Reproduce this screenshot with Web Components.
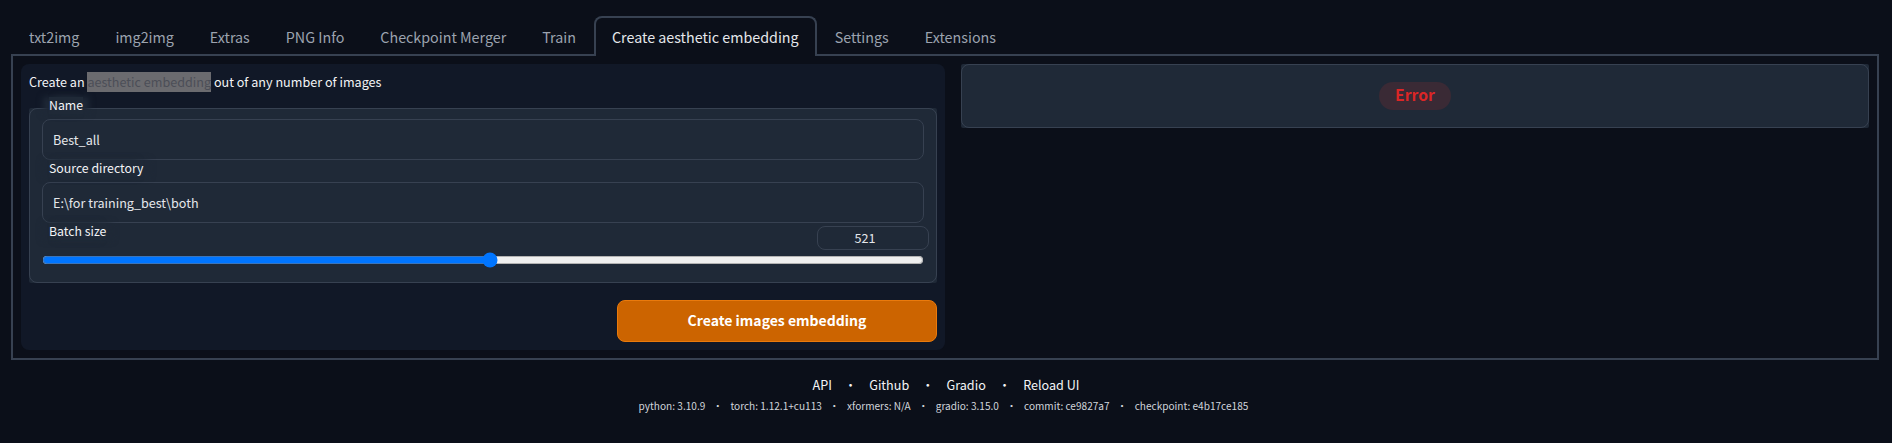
<!DOCTYPE html>
<html lang="en">
<head>
<meta charset="utf-8">
<title>Create aesthetic embedding</title>
<style>
  html, body { margin: 0; background: #0b0f19; }
  body { font-family: "Noto Sans CJK SC", "Noto Sans", sans-serif; color: #e5e7eb; font-size: 12.6px; }
</style>
</head>
<body>
<ui-app>
  <ui-tabs slot="tabs">
    <ui-tab>txt2img</ui-tab>
    <ui-tab>img2img</ui-tab>
    <ui-tab>Extras</ui-tab>
    <ui-tab>PNG Info</ui-tab>
    <ui-tab>Checkpoint Merger</ui-tab>
    <ui-tab>Train</ui-tab>
    <ui-tab active>Create aesthetic embedding</ui-tab>
    <ui-tab>Settings</ui-tab>
    <ui-tab>Extensions</ui-tab>
  </ui-tabs>
  <ui-frame slot="frame">
    <ui-column>
      <ui-intro>Create an <mark-text>aesthetic embedding</mark-text> out of any number of images</ui-intro>
      <ui-form>
        <ui-field label="Name">Best_all</ui-field>
        <ui-field label="Source directory">E:\for training_best\both</ui-field>
        <ui-slider label="Batch size" min="1" max="1024" value="521"></ui-slider>
      </ui-form>
      <ui-button>Create images embedding</ui-button>
    </ui-column>
    <ui-result>Error</ui-result>
  </ui-frame>
  <ui-footer slot="footer"></ui-footer>
</ui-app>

<script>
// small base class, every element just gives its own html
class Base extends HTMLElement {
  constructor() {
    super();
    this.attachShadow({ mode: "open" });
  }
  connectedCallback() {
    this.shadowRoot.innerHTML = this.html();
  }
}

class UiApp extends Base {
  html() {
    return `
      <style>
      :host{display:block;padding:16px 13px 0 11px;}
      </style>
      <slot name="tabs"></slot>
      <slot name="frame"></slot>
      <slot name="footer"></slot>
    `;
  }
}

class UiTabs extends Base {
  html() {
    return `
      <style>
      :host{display:flex;height:40px;box-sizing:border-box;border-bottom:2px solid #374151;}
      </style>
      <slot></slot>
    `;
  }
}

class UiTab extends Base {
  html() {
    return `
      <style>
      :host{display:block;height:40px;box-sizing:border-box;padding:7px 16px 0;font-size:14.3px;line-height:24px;
        border:2px solid transparent;border-bottom:0;color:#9ca3af;white-space:nowrap;}
      :host([active]){border-color:#374151;border-radius:8px 8px 0 0;background:#0b0f19;color:#e5e7eb;}
      </style>
      <slot></slot>
    `;
  }
}

class UiFrame extends Base {
  html() {
    return `
      <style>
      :host{display:grid;grid-template-columns:924fr 908fr;gap:16px;align-items:start;height:304px;box-sizing:border-box;
        padding:8px;border:2px solid #374151;border-top:0;}
      </style>
      <slot></slot>
    `;
  }
}

class UiColumn extends Base {
  html() {
    return `
      <style>
      :host{display:flex;flex-direction:column;box-sizing:border-box;height:286px;padding:6px 8px 8px;background:#111827;border-radius:8px;}
      </style>
      <slot></slot>
    `;
  }
}

class UiIntro extends Base {
  html() {
    return `
      <style>
      :host{display:block;height:24px;margin-bottom:14px;font-size:12.6px;line-height:24px;color:#f3f4f6;white-space:nowrap;}
      </style>
      <slot></slot>
    `;
  }
}

class MarkText extends Base {
  html() {
    return `
      <style>
      :host{display:inline-block;height:20px;line-height:20px;vertical-align:top;margin-top:2px;background:#6b6b6f;color:#4b4e57;}
      </style>
      <slot></slot>
    `;
  }
}

class UiForm extends Base {
  html() {
    return `
      <style>
      :host{display:flex;flex-direction:column;gap:12px;position:relative;box-sizing:border-box;height:175px;padding:1px 13px 0;background:#1f2937;border-radius:2px;}
      :host::before{content:"";position:absolute;inset:0;border:1px solid #374151;border-radius:8px;pointer-events:none;}
      </style>
      <slot></slot>
    `;
  }
}

// label that sits over the top edge of its field
const labelCss = `
  .label{position:absolute;left:7px;top:-12px;z-index:3;font-size:12.3px;line-height:17px;color:#f3f4f6;background:#1f2937;
    box-shadow:6px 0 6px 0 #1f2937,-6px 0 6px 0 #1f2937;white-space:nowrap;}
`;

class UiField extends Base {
  html() {
    return `
      <style>
      :host{display:block;position:relative;padding-top:10px;}
      ${labelCss}
      .box{height:41px;box-sizing:border-box;padding:0 10px;border:1px solid #374151;border-radius:8px;background:#1f2937;
        font-size:12.6px;line-height:39px;color:#e5e7eb;white-space:nowrap;}
      </style>
      <div class="label">${this.getAttribute("label")}</div>
      <div class="box"><slot></slot></div>
    `;
  }
}

class UiSlider extends Base {
  html() {
    const min = this.getAttribute("min"), max = this.getAttribute("max"), value = this.getAttribute("value");
    return `
      <style>
      :host{display:block;position:relative;}
      ${labelCss}
      .top{display:flex;justify-content:flex-end;margin:-9px -5px 2px 0;}
      .num{width:112px;height:24px;box-sizing:border-box;padding-right:16px;border:1px solid #374151;border-radius:8px;
        text-align:center;font-size:12.6px;line-height:22px;color:#e5e7eb;}
      input{display:block;box-sizing:border-box;width:882px;height:16px;margin:0;}
      </style>
      <div class="label">${this.getAttribute("label")}</div>
      <div class="top"><div class="num">${value}</div></div>
      <input type="range" min="${min}" max="${max}" value="${value}">
    `;
  }
}

class UiButton extends Base {
  html() {
    return `
      <style>
      :host{display:block;align-self:flex-end;width:320px;height:42px;box-sizing:border-box;margin-top:17px;border:1px solid #ea7a0c;border-radius:8px;
        background:#cc6400;color:#fff;font-size:14px;font-weight:600;line-height:38px;text-align:center;white-space:nowrap;}
      </style>
      <slot></slot>
    `;
  }
}

class UiResult extends Base {
  html() {
    return `
      <style>
      :host{display:flex;align-items:center;justify-content:center;position:relative;height:64px;box-sizing:border-box;background:#1f2937;border-radius:2px;}
      :host::before{content:"";position:absolute;inset:0;border:1px solid #374151;border-radius:8px;pointer-events:none;}
      .pill{display:block;width:72px;height:28px;border-radius:14px;background:#3a2a35;color:#dc2626;
        font-size:15.7px;font-weight:600;line-height:26px;text-align:center;}
      </style>
      <div class="pill"><slot></slot></div>
    `;
  }
}

class UiFooter extends Base {
  html() {
    const links = ["API", "Github", "Gradio", "Reload UI"];
    const info = ["python: 3.10.9", "torch: 1.12.1+cu113", "xformers: N/A", "gradio: 3.15.0", "commit: ce9827a7", "checkpoint: e4b17ce185"];
    const row = (items) => items.map((t) => `<span>${t}</span>`).join(`<i>•</i>`);
    return `
      <style>
      :host{display:block;padding-top:15px;margin-left:-11px;margin-right:-13px;}
      .row{display:flex;justify-content:center;white-space:nowrap;}
      .links{height:21px;font-size:12.6px;line-height:20px;color:#f3f4f6;}
      .links i{margin:0 12.4px;font-style:normal;}
      .info{height:20px;padding-right:5px;font-size:10.08px;line-height:20px;color:#d1d5db;}
      .info i{margin:0 7.5px;font-style:normal;}
      </style>
      <div class="row links">${row(links)}</div>
      <div class="row info">${row(info)}</div>
    `;
  }
}

customElements.define("ui-app", UiApp);
customElements.define("ui-tabs", UiTabs);
customElements.define("ui-tab", UiTab);
customElements.define("ui-frame", UiFrame);
customElements.define("ui-column", UiColumn);
customElements.define("ui-intro", UiIntro);
customElements.define("mark-text", MarkText);
customElements.define("ui-form", UiForm);
customElements.define("ui-field", UiField);
customElements.define("ui-slider", UiSlider);
customElements.define("ui-button", UiButton);
customElements.define("ui-result", UiResult);
customElements.define("ui-footer", UiFooter);
</script>
</body>
</html>
